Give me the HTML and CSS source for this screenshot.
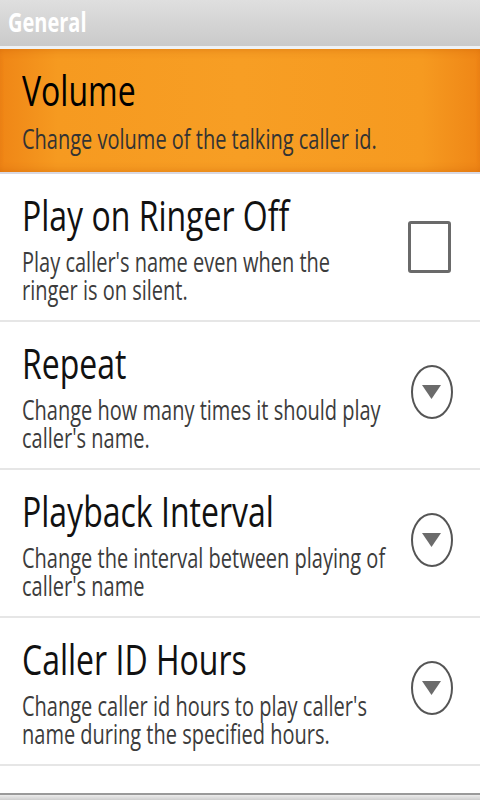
FILE: index.html
```html
<!DOCTYPE html>
<html lang="en">
<head>
    <meta charset="UTF-8">
    <meta name="viewport" content="width=device-width, initial-scale=1.0">
    <title>Talking Caller ID - Settings</title>
    <link rel="stylesheet" href="styles.css">
</head>
<body>
    <div class="header">
        <span class="header-title">General</span>
    </div>

    <ul class="prefs">
        <li class="pref pref-active">
            <div class="pref-text">
                <div class="pref-title">Volume</div>
                <div class="pref-summary">Change volume of the talking caller id.</div>
            </div>
        </li>
        <li class="pref">
            <div class="pref-text">
                <div class="pref-title">Play on Ringer Off</div>
                <div class="pref-summary">Play caller's name even when the<br>ringer is on silent.</div>
            </div>
            <span class="checkbox"></span>
        </li>
        <li class="pref">
            <div class="pref-text">
                <div class="pref-title">Repeat</div>
                <div class="pref-summary">Change how many times it should play<br>caller's name.</div>
            </div>
            <svg class="spinner" width="44" height="56" viewBox="0 0 44 56">
                <ellipse cx="22" cy="28" rx="20" ry="26" fill="none" stroke="#555" stroke-width="2"/>
                <polygon points="12,21 31,21 21.5,35" fill="#6b6b6b"/>
            </svg>
        </li>
        <li class="pref">
            <div class="pref-text">
                <div class="pref-title">Playback Interval</div>
                <div class="pref-summary">Change the interval between playing of<br>caller's name</div>
            </div>
            <svg class="spinner" width="44" height="56" viewBox="0 0 44 56">
                <ellipse cx="22" cy="28" rx="20" ry="26" fill="none" stroke="#555" stroke-width="2"/>
                <polygon points="12,21 31,21 21.5,35" fill="#6b6b6b"/>
            </svg>
        </li>
        <li class="pref">
            <div class="pref-text">
                <div class="pref-title">Caller ID Hours</div>
                <div class="pref-summary">Change caller id hours to play caller's<br>name during the specified hours.</div>
            </div>
            <svg class="spinner" width="44" height="56" viewBox="0 0 44 56">
                <ellipse cx="22" cy="28" rx="20" ry="26" fill="none" stroke="#555" stroke-width="2"/>
                <polygon points="12,21 31,21 21.5,35" fill="#6b6b6b"/>
            </svg>
        </li>
        <li class="pref">
            <div class="pref-text">
                <div class="pref-title">Pause Music</div>
                <div class="pref-summary">Pause music while announcing the caller.</div>
            </div>
        </li>
    </ul>

    <div class="bottom-edge"></div>
</body>
</html>
```

FILE: styles.css
```css
* {
    margin: 0;
    padding: 0;
    box-sizing: border-box;
}

html, body {
    height: 100%;
    overflow: hidden;
}

body {
    font-family: 'Open Sans', 'DejaVu Sans', sans-serif;
    background: #fff;
    color: #111;
}

.header {
    height: 49px;
    padding: 9px 0 0 8px;
    background: linear-gradient(#dfdfdf, #cacaca);
    border-bottom: 3px solid #eef2f6;
}

.header-title {
    display: inline-block;
    font-size: 20px;
    line-height: 20px;
    font-weight: bold;
    color: #fff;
    transform: scaleY(1.35);
    transform-origin: 0 0;
}

.prefs {
    list-style: none;
}

.pref {
    display: flex;
    align-items: center;
    height: 148px;
    padding: 0 26px 0 22px;
    border-bottom: 2px solid #e6e6e6;
}

.pref-active {
    height: 125px;
    background: linear-gradient(to right, #ef8616 0%, #f69a20 12%, #f79e24 50%, #f69a20 88%, #ef8616 100%);
    box-shadow: inset 0 6px 8px -6px rgba(200, 90, 0, 0.5), inset 0 -6px 8px -6px rgba(200, 90, 0, 0.5);
    border-bottom-color: #d8d8e2;
}

.pref-text {
    align-self: flex-start;
    margin-top: 23px;
    transform: scaleY(1.32);
    transform-origin: 0 0;
    white-space: nowrap;
}

.pref-title {
    font-size: 32px;
    line-height: 28px;
    color: #111;
}

.pref-summary {
    margin-top: 12px;
    font-size: 20px;
    line-height: 20.5px;
    color: #3c3c3c;
}

.pref-active .pref-title {
    color: #000;
}

.pref-active .pref-summary {
    margin-top: 13px;
    color: #333;
}

.checkbox {
    margin-left: auto;
    margin-right: 3px;
    width: 43px;
    height: 52px;
    border: 3px solid #6a6a6a;
    border-radius: 3px;
    background: #fff;
}

.spinner {
    margin-left: auto;
    margin-bottom: 6px;
}

.bottom-edge {
    position: fixed;
    left: 0;
    right: 0;
    bottom: 0;
    height: 7px;
    border-top: 2px solid #9a9a9a;
    background: linear-gradient(#ececec, #cfcfcf);
}
```
